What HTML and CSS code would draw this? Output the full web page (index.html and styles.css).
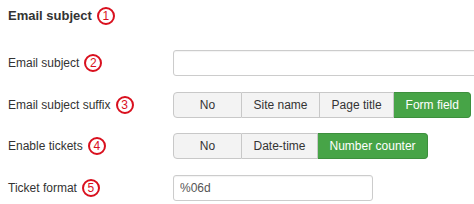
FILE: index.html
```html
<!DOCTYPE html>
<html lang="en">
<head>
  <meta charset="UTF-8">
  <title>Email subject</title>
  <link rel="stylesheet" href="styles.css">
</head>
<body>

  <h3 class="section-title">Email subject <span class="marker">1</span></h3>

  <div class="form">
    <div class="row">
      <label class="row-label">Email subject <span class="marker">2</span></label>
      <input class="text-input wide" type="text" value="">
    </div>

    <div class="row">
      <label class="row-label">Email subject suffix <span class="marker">3</span></label>
      <div class="btn-group">
        <button class="btn">No</button>
        <button class="btn">Site name</button>
        <button class="btn">Page title</button>
        <button class="btn active">Form field</button>
      </div>
    </div>

    <div class="row">
      <label class="row-label">Enable tickets <span class="marker">4</span></label>
      <div class="btn-group">
        <button class="btn">No</button>
        <button class="btn">Date-time</button>
        <button class="btn active">Number counter</button>
      </div>
    </div>

    <div class="row">
      <label class="row-label">Ticket format <span class="marker">5</span></label>
      <input class="text-input" type="text" value="%06d">
    </div>
  </div>

</body>
</html>
```

FILE: styles.css
```css
body {
  margin: 0;
  padding: 4px 8px;
  background: #ffffff;
  font-family: 'Liberation Sans', Arial, sans-serif;
  font-size: 12px;
  color: #333333;
}

.section-title {
  margin: 0 0 22px 0;
  font-size: 13px;
  font-weight: bold;
  line-height: 24px;
  display: flex;
  align-items: center;
}

.marker {
  display: inline-flex;
  align-items: center;
  justify-content: center;
  box-sizing: border-box;
  width: 18px;
  height: 18px;
  margin-left: 5px;
  border: 2px solid #d9101e;
  border-radius: 50%;
  color: #d9101e;
  font-size: 12px;
  font-weight: normal;
  line-height: 1;
}

.form {
  display: grid;
  row-gap: 15.5px;
}

.row {
  display: flex;
  align-items: center;
  height: 26px;
}

.row-label {
  width: 165px;
  display: flex;
  align-items: center;
}

.text-input {
  box-sizing: border-box;
  width: 200px;
  height: 26px;
  padding: 0 6px;
  border: 1px solid #cccccc;
  border-radius: 3px;
  font-family: inherit;
  font-size: 12px;
  color: #555555;
  box-shadow: inset 0 1px 1px rgba(0, 0, 0, 0.05);
}

.text-input.wide {
  width: 320px;
}

.btn-group {
  display: flex;
  height: 26px;
}

.btn {
  box-sizing: border-box;
  min-width: 69px;
  height: 26px;
  padding: 0 11.5px;
  margin: 0;
  background: #f3f3f3;
  border: 1px solid #c8c8c8;
  border-left-width: 0;
  font-family: inherit;
  font-size: 12px;
  color: #333333;
}

.btn:first-child {
  border-left-width: 1px;
  border-radius: 4px 0 0 4px;
}

.btn:last-child {
  border-radius: 0 4px 4px 0;
}

.btn.active {
  background: #47a447;
  border-color: #3d8f3d;
  color: #ffffff;
}
```
